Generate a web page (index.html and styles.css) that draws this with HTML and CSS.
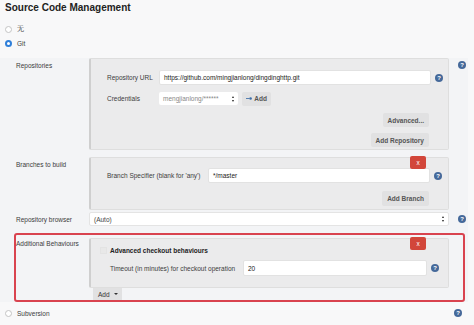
FILE: index.html
```html
<!DOCTYPE html>
<html lang="en">
<head>
    <meta charset="UTF-8">
    <meta name="viewport" content="width=device-width, initial-scale=1.0">
    <title>Source Code Management</title>
    <link rel="stylesheet" href="styles.css">
</head>
<body>
    <h1 class="title">Source Code Management</h1>

    <div class="radio-row">
        <span class="radio"></span>
        <span>无</span>
    </div>
    <div class="radio-row">
        <span class="radio checked"></span>
        <span>Git</span>
    </div>

    <div class="git-section">
        <!-- Repositories -->
        <div class="row">
            <div class="row-label">Repositories</div>
            <div class="block repo-block">
                <div class="field">
                    <span class="field-label">Repository URL</span>
                    <div class="input url-input">https://github.com/mingjianlong/dingdinghttp.git</div>
                    <span class="help"></span>
                </div>
                <div class="field">
                    <span class="field-label">Credentials</span>
                    <div class="select cred-select">
                        <span class="blurred">mengjianlong/******</span>
                        <span class="arrows"></span>
                    </div>
                    <button class="btn add-cred">
                        <svg width="9" height="5" viewBox="0 0 9 5"><path d="M0 2.5h5" stroke="#3d6ea8" stroke-width="1.2"/><circle cx="6.5" cy="2.5" r="1.8" fill="#3d6ea8"/></svg>
                        Add
                    </button>
                </div>
                <div class="btn-row"><button class="btn">Advanced...</button></div>
                <div class="btn-row"><button class="btn">Add Repository</button></div>
            </div>
            <div class="outer-help"><span class="help"></span></div>
        </div>

        <!-- Branches -->
        <div class="row">
            <div class="row-label">Branches to build</div>
            <div class="block branch-block">
                <button class="btn-x">x</button>
                <div class="field">
                    <span class="field-label">Branch Specifier (blank for 'any')</span>
                    <div class="input branch-input">*/master</div>
                    <span class="help"></span>
                </div>
                <div class="btn-row"><button class="btn">Add Branch</button></div>
            </div>
        </div>

        <!-- Repository browser -->
        <div class="row browser-row">
            <div class="row-label">Repository browser</div>
            <div class="select browser-select">
                <span>(Auto)</span>
                <span class="arrows"></span>
            </div>
            <div class="outer-help"><span class="help"></span></div>
        </div>

        <!-- Additional Behaviours -->
        <div class="highlight">
            <div class="row">
                <div class="row-label">Additional Behaviours</div>
                <div class="behaviours">
                    <div class="block behaviour-block">
                        <button class="btn-x">x</button>
                        <div class="check-row">
                            <span class="checkbox"></span>
                            <b>Advanced checkout behaviours</b>
                        </div>
                        <div class="field timeout-field">
                            <span class="field-label">Timeout (in minutes) for checkout operation</span>
                            <div class="input timeout-input">20</div>
                            <span class="help"></span>
                        </div>
                    </div>
                    <button class="btn add-drop">Add <span class="caret"></span></button>
                </div>
            </div>
        </div>
    </div>

    <div class="radio-row svn-row">
        <span class="radio"></span>
        <span>Subversion</span>
        <span class="help svn-help"></span>
    </div>
</body>
</html>
```

FILE: styles.css
```css
* {
    box-sizing: border-box;
    margin: 0;
    padding: 0;
}

body {
    font-family: 'Liberation Sans', Arial, sans-serif;
    font-size: 6.5px;
    color: #3c3c3c;
    background-color: #f8f8f9;
    width: 474px;
    height: 325px;
    overflow: hidden;
}

.title {
    font-size: 10px;
    font-weight: bold;
    color: #222;
    line-height: 16px;
    padding-left: 5px;
}

.radio-row {
    display: flex;
    align-items: center;
    gap: 5px;
    height: 14px;
    padding-left: 5px;
}

.radio-row:first-of-type {
    margin-top: 6px;
}

.radio {
    width: 7px;
    height: 7px;
    border-radius: 50%;
    border: 1px solid #c4c4c4;
    background-color: #fff;
}

.radio.checked {
    border: 2px solid #2f7fd9;
}

.git-section {
    margin-top: 8px;
    background-color: #f3f4f6;
    width: 468px;
}

.row {
    display: flex;
    align-items: flex-start;
}

.row + .row {
    margin-top: 7px;
}

.row-label {
    width: 89px;
    padding-left: 16px;
    padding-top: 4px;
}

.block {
    position: relative;
    width: 360px;
    background-color: #ebebec;
    border: 1px solid #dedede;
    border-left: 2px solid #cfcfcf;
    border-radius: 2px;
}

.repo-block {
    padding: 11px 0 4px 16px;
    height: 92px;
}

.field {
    display: flex;
    align-items: center;
    height: 15px;
}

.field-label {
    width: 52px;
    flex-shrink: 0;
}

.input {
    height: 15px;
    background-color: #fff;
    border: 1px solid #e2e2e2;
    border-radius: 2px;
    padding-left: 4px;
    display: flex;
    align-items: center;
    color: #222;
}

.url-input {
    width: 272px;
}

.help {
    width: 8px;
    height: 8px;
    border-radius: 50%;
    background-color: #45699a;
    display: inline-block;
    margin-left: 4px;
    position: relative;
}

.help::after {
    content: '?';
    position: absolute;
    left: 0;
    top: 0;
    width: 8px;
    line-height: 8px;
    text-align: center;
    color: #fff;
    font-size: 6px;
    font-weight: bold;
}

.field + .field {
    margin-top: 6px;
}

.select {
    height: 13px;
    background-color: #fff;
    border-radius: 2px;
    display: flex;
    align-items: center;
    justify-content: space-between;
    padding: 0 3px 0 4px;
    color: #444;
}

.cred-select {
    width: 79px;
}

.blurred {
    color: #888;
}

.arrows {
    width: 3px;
    height: 6px;
    position: relative;
}

.arrows::before,
.arrows::after {
    content: '';
    position: absolute;
    left: 0;
    border-left: 1.5px solid transparent;
    border-right: 1.5px solid transparent;
}

.arrows::before {
    top: 0;
    border-bottom: 2.5px solid #222;
}

.arrows::after {
    bottom: 0;
    border-top: 2.5px solid #222;
}

.btn {
    font-family: inherit;
    font-size: 6.5px;
    font-weight: bold;
    color: #555;
    background-color: #e1e1e2;
    border: none;
    border-radius: 2px;
    height: 14px;
    padding: 0 5px;
}

.add-cred {
    margin-left: 4px;
    height: 14px;
    width: 29px;
    display: flex;
    align-items: center;
    gap: 2px;
    padding: 0 4px;
}

.btn-row {
    display: flex;
    justify-content: flex-end;
    padding-right: 19px;
    margin-top: 6px;
}

.repo-block .btn-row:nth-of-type(3) {
    margin-top: 7px;
}

.outer-help {
    padding-left: 5px;
}

.repo-block + .outer-help {
    padding-top: 3px;
}

.branch-block {
    padding: 10px 0 4px 16px;
    height: 53px;
}

.branch-block .field-label {
    width: 101px;
}

.branch-input {
    width: 222px;
}

.branch-block .btn-row {
    margin-top: 8px;
}

.branch-block .btn {
    height: 15px;
}

.btn-x {
    position: absolute;
    top: -2px;
    right: 22px;
    width: 16px;
    height: 13px;
    background-color: #d2463a;
    color: #fff;
    border: none;
    border-radius: 2px;
    font-family: inherit;
    font-size: 6.5px;
}

.row.browser-row {
    margin-top: 2px;
    align-items: center;
}

.browser-row .row-label {
    padding-top: 0;
}

.browser-select {
    width: 360px;
    height: 14px;
    border: 1px solid #e4e4e4;
}

.browser-row .outer-help {
    padding-left: 5px;
    display: flex;
}

.highlight {
    margin-top: 7px;
    margin-left: 14px;
    width: 451px;
    height: 69px;
    border: 2px solid #d9434f;
    border-radius: 3px;
}

.highlight .row-label {
    width: 73px;
    padding-left: 0;
    padding-top: 5px;
    white-space: nowrap;
}

.behaviours {
    margin-top: 3px;
}

.behaviour-block {
    height: 50px;
    padding: 6px 0 0 9px;
}

.check-row {
    display: flex;
    align-items: center;
    gap: 3px;
    height: 10px;
}

.checkbox {
    width: 7px;
    height: 7px;
    background-color: #e8e8e8;
    border: 1px solid #e3e3e3;
}

.check-row b {
    color: #222;
}

.field.timeout-field {
    margin-top: 5px;
    padding-left: 10px;
    height: 16px;
}

.timeout-field .field-label {
    width: 133px;
}

.timeout-input {
    width: 184px;
    height: 16px;
}

.add-drop {
    margin-left: 4px;
    height: 12px;
    width: 29px;
    font-weight: normal;
    color: #333;
    display: flex;
    align-items: center;
    gap: 4px;
    padding: 0 5px;
    border-radius: 0;
}

.caret {
    border-left: 2px solid transparent;
    border-right: 2px solid transparent;
    border-top: 2.5px solid #333;
}

.svn-row {
    margin-top: 4px;
    position: relative;
}

.svn-help {
    position: absolute;
    left: 450px;
    top: 3px;
}
```
